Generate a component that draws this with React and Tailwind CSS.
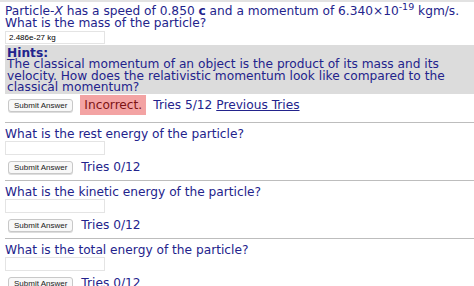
export default function App() {
  const questions = [
    "What is the rest energy of the particle?",
    "What is the kinetic energy of the particle?",
    "What is the total energy of the particle?",
  ];

  const SubmitButton = () => (
    <button
      type="button"
      className="h-[13px] px-[5px] rounded-[3px] border border-[#c8c8c8] bg-[#f8f8f8] text-[8px] leading-[11px] text-[#222] font-['Liberation_Sans',sans-serif] shadow-[0_1px_0_#ddd]"
    >
      Submit Answer
    </button>
  );

  return (
    <div className="w-[474px] h-[286px] overflow-hidden bg-white text-[#23238c] font-['DejaVu_Sans',Verdana,sans-serif]">
      <div className="h-[2px] bg-[#e2e2e2]" />
      <div className="px-[5px] pt-[3px] text-[12.2px] leading-[12px] whitespace-nowrap">
        Particle-<i>X</i> has a speed of 0.850 <b>c</b> and a momentum of 6.340×10
        <sup className="text-[9.5px] leading-none">-19</sup> kgm/s.
        <br />
        What is the mass of the particle?
      </div>
      <div className="ml-[5px] mt-[2px] w-[100px] h-[13px] border border-[#e4e4e4] px-[3px] text-[8px] leading-[11px] text-black font-['Liberation_Sans',sans-serif]">
        2.486e-27 kg
      </div>
      <div className="ml-[5px] mt-[1px] h-[49px] bg-[#dcdcdc] pt-[3px] px-[2px] text-[12.2px] leading-[11.3px] whitespace-nowrap">
        <div className="font-bold">Hints:</div>
        The classical momentum of an object is the product of its mass and its
        <br />
        velocity. How does the relativistic momentum look like compared to the
        <br />
        classical momentum?
      </div>
      <div className="flex items-center gap-[7px] pl-[8px] h-[22px] text-[12.2px]">
        <SubmitButton />
        <span className="bg-[#f3a3a3] text-[#7d1414] px-[4px] h-[20px] leading-[20px]">Incorrect.</span>
        <span>
          Tries 5/12 <span className="underline">Previous Tries</span>
        </span>
      </div>
      {questions.map((q, i) => (
        <div key={i} className="ml-[5px] mt-[6px] border-t border-[#bdbdbd]">
          <div className="pt-[5px] text-[12.2px] leading-[12px]">{q}</div>
          <div className="mt-[1px] w-[100px] h-[14px] border border-[#e4e4e4]" />
          <div className="flex items-center gap-[8px] pl-[3px] mt-[5px] h-[14px] text-[12.2px]">
            <SubmitButton />
            <span>Tries 0/12</span>
          </div>
        </div>
      ))}
    </div>
  );
}
